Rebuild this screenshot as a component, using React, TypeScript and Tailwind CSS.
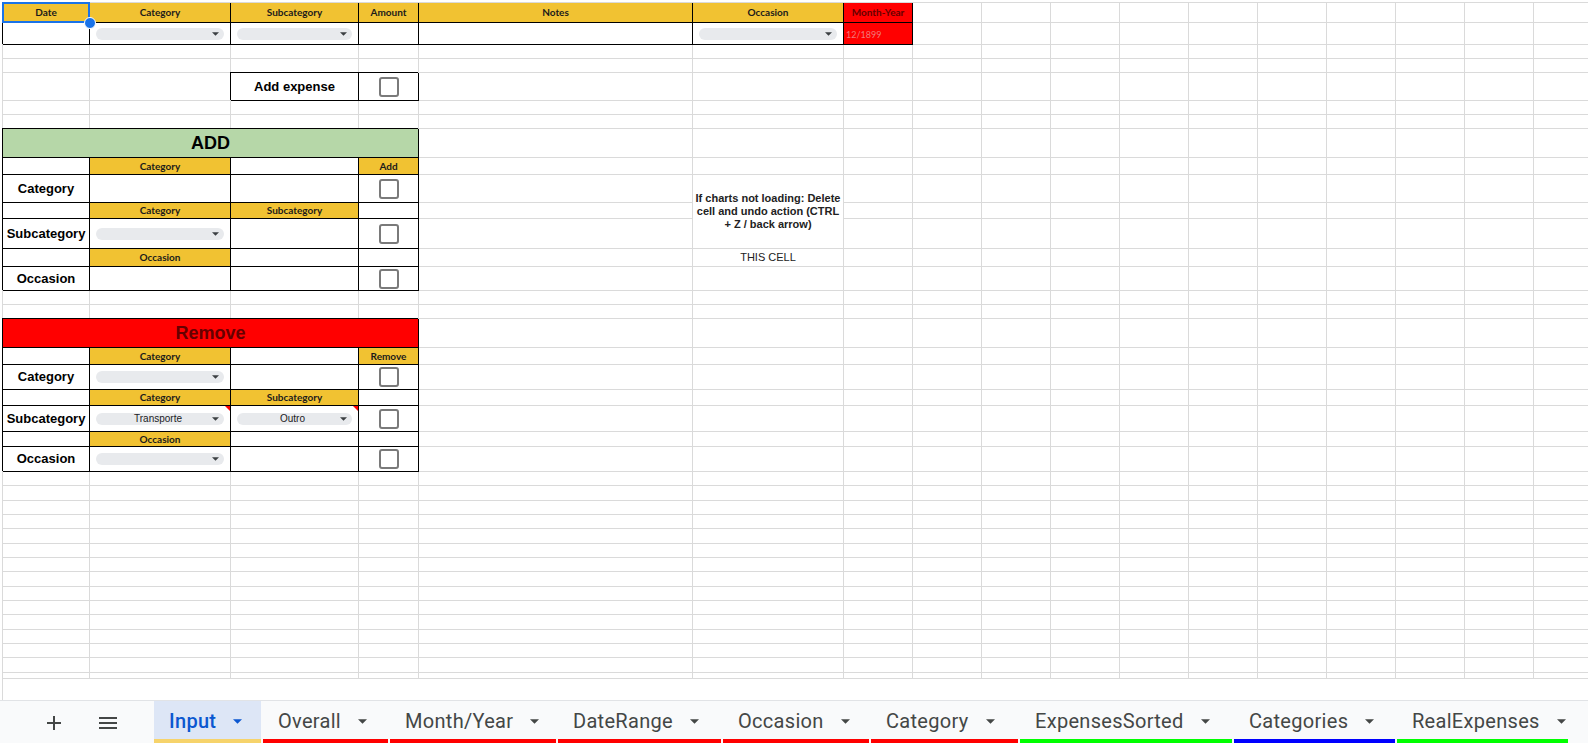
import React from 'react';

// sheet grid: 17 columns, 38 rows (last one is cut by the scroll area)
const ROW_COUNT = 38;
const COL_COUNT = 17;

const LINE = 'border-r border-b border-[#dadada] bg-white';
const BOX = 'border-r border-b border-black shadow-[-1px_-1px_0_0_#000]';
const BOX_TOP = 'border-r border-b border-black shadow-[-1px_0_0_0_#000]';

const ARIAL = "font-['Liberation_Sans',Arial,sans-serif]";
const CALIBRI = "font-['Lato',sans-serif]";

function Caret({ className = 'h-[4px] w-[7px] fill-[#3c4043]' }: { className?: string }) {
  return (
    <svg viewBox="0 0 8 4" className={`shrink-0 ${className}`}>
      <path d="M0 0h8L4 4z" />
    </svg>
  );
}

function Checkbox() {
  return <div className="h-[20px] w-[20px] rounded-[3px] border-2 border-[#7a7a7a] bg-white" />;
}

function Chip({ value }: { value?: string }) {
  return (
    <div className="flex h-[12px] flex-1 items-center rounded-full bg-[#e8eaed] pl-2 pr-[5px]">
      <span className={`flex-1 text-center ${ARIAL} text-[10px] leading-none text-[#202124]`}>{value}</span>
      <Caret />
    </div>
  );
}

const head = (text: string, border = BOX) => (
  <div
    className={`${border} flex items-center justify-center bg-[#f1c232] ${CALIBRI} text-[10px] font-bold text-[#1b1b1b]`}
  >
    {text}
  </div>
);

const label = (text: string) => (
  <div className={`${BOX} flex items-center justify-center bg-white ${ARIAL} text-[13px] font-bold text-black`}>
    {text}
  </div>
);

const blank = <div className={`${BOX} bg-white`} />;

const check = (
  <div className={`${BOX} flex items-center justify-center bg-white`}>
    <Checkbox />
  </div>
);

const chip = (value?: string, flagged = false) => (
  <div className={`${BOX} relative flex items-center bg-white px-[6px]`}>
    <Chip value={value} />
    {flagged && (
      <span className="absolute right-0 top-0 border-l-[5px] border-t-[5px] border-l-transparent border-t-[#ff0000]" />
    )}
  </div>
);

const dateCell = (
  <div className={`${BOX_TOP} relative flex items-center justify-center bg-[#f1c232] ${CALIBRI} text-[10px] font-bold text-[#1b1b1b]`}>
    Date
    <span className="absolute -left-px -top-px bottom-[-1px] right-[-1px] border-2 border-[#1a73e8]" />
    <span className="absolute bottom-[-7px] right-[-7px] z-10 h-[12px] w-[12px] rounded-full border border-white bg-[#1a73e8]" />
  </div>
);

const cells: Record<string, React.ReactNode> = {
  // input row
  '1:0': dateCell,
  '1:1': head('Category', BOX_TOP),
  '1:2': head('Subcategory', BOX_TOP),
  '1:3': head('Amount', BOX_TOP),
  '1:4': head('Notes', BOX_TOP),
  '1:5': head('Occasion', BOX_TOP),
  '1:6': (
    <div className={`${BOX_TOP} flex items-center justify-center bg-[#ff0000] ${CALIBRI} text-[10px] font-bold text-[#660000]`}>
      Month-Year
    </div>
  ),
  '2:0': blank,
  '2:1': chip(),
  '2:2': chip(),
  '2:3': blank,
  '2:4': blank,
  '2:5': chip(),
  '2:6': (
    <div className={`${BOX} flex items-end bg-[#ff0000] pb-[3px] pl-[2px] ${CALIBRI} text-[9px] text-[#f07a7a]`}>
      12/1899
    </div>
  ),
  '5:2': label('Add expense'),
  '5:3': check,

  // ADD block
  '8:0': (
    <div className={`${BOX} col-span-4 flex items-center justify-center bg-[#b6d7a8] ${ARIAL} text-[18px] font-bold text-black`}>
      ADD
    </div>
  ),
  '9:0': blank,
  '9:1': head('Category'),
  '9:2': blank,
  '9:3': head('Add'),
  '10:0': label('Category'),
  '10:1': blank,
  '10:2': blank,
  '10:3': check,
  '10:5': (
    <div className={`${LINE} row-span-3 flex flex-col items-center justify-center whitespace-nowrap ${ARIAL} text-[11px] font-bold leading-[13px] text-[#222]`}>
      <span>If charts not loading: Delete</span>
      <span>cell and undo action (CTRL</span>
      <span>+ Z / back arrow)</span>
    </div>
  ),
  '11:0': blank,
  '11:1': head('Category'),
  '11:2': head('Subcategory'),
  '11:3': blank,
  '12:0': label('Subcategory'),
  '12:1': chip(),
  '12:2': blank,
  '12:3': check,
  '13:0': blank,
  '13:1': head('Occasion'),
  '13:2': blank,
  '13:3': blank,
  '13:5': (
    <div className={`${LINE} flex items-center justify-center ${ARIAL} text-[11px] text-[#222]`}>THIS CELL</div>
  ),
  '14:0': label('Occasion'),
  '14:1': blank,
  '14:2': blank,
  '14:3': check,

  // Remove block
  '17:0': (
    <div className={`${BOX} col-span-4 flex items-center justify-center bg-[#ff0000] ${ARIAL} text-[18px] font-bold text-[#660000]`}>
      Remove
    </div>
  ),
  '18:0': blank,
  '18:1': head('Category'),
  '18:2': blank,
  '18:3': head('Remove'),
  '19:0': label('Category'),
  '19:1': chip(),
  '19:2': blank,
  '19:3': check,
  '20:0': blank,
  '20:1': head('Category'),
  '20:2': head('Subcategory'),
  '20:3': blank,
  '21:0': label('Subcategory'),
  '21:1': chip('Transporte', true),
  '21:2': chip('Outro', true),
  '21:3': check,
  '22:0': blank,
  '22:1': head('Occasion'),
  '22:2': blank,
  '22:3': blank,
  '23:0': label('Occasion'),
  '23:1': chip(),
  '23:2': blank,
  '23:3': check,
};

// cells covered by merges
const SKIP = new Set(['8:1', '8:2', '8:3', '17:1', '17:2', '17:3', '11:5', '12:5']);

const TABS = [
  { name: 'Input', w: 'w-[107px]', bar: 'bg-[#f6d36b]', active: true },
  { name: 'Overall', w: 'w-[125px]', bar: 'bg-[#ff0000]' },
  { name: 'Month/Year', w: 'w-[166px]', bar: 'bg-[#ff0000]' },
  { name: 'DateRange', w: 'w-[163px]', bar: 'bg-[#ff0000]' },
  { name: 'Occasion', w: 'w-[146px]', bar: 'bg-[#ff0000]' },
  { name: 'Category', w: 'w-[147px]', bar: 'bg-[#ff0000]' },
  { name: 'ExpensesSorted', w: 'w-[212px]', bar: 'bg-[#00ff00]' },
  { name: 'Categories', w: 'w-[161px]', bar: 'bg-[#0000ff]' },
  { name: 'RealExpenses', w: 'w-[171px]', bar: 'bg-[#00ff00]' },
];

function SheetTabs() {
  return (
    <div className="flex h-[43px] shrink-0 border-t border-[#e1e3e6] bg-[#f9fafb]">
      <div className="flex w-[154px] shrink-0 items-center pl-[44px] pt-[2px] text-[#444746]">
        <svg viewBox="0 0 20 20" className="h-5 w-5 stroke-[#444746]" fill="none" strokeWidth="2">
          <path d="M10 3v14M3 10h14" />
        </svg>
        <svg viewBox="0 0 20 20" className="ml-[34px] h-5 w-5 stroke-[#444746]" fill="none" strokeWidth="2">
          <path d="M1 5h18M1 10h18M1 15h18" />
        </svg>
      </div>
      <div className="flex gap-[2px]">
        {TABS.map((t) => (
          <div key={t.name} className={`flex shrink-0 flex-col ${t.w} ${t.active ? 'bg-[#dde6f6]' : ''}`}>
            <div
              className={`flex flex-1 items-center gap-[17px] pl-[15px] pt-[2px] font-['Roboto',sans-serif] text-[20px] tracking-[0.3px] ${
                t.active ? 'font-medium text-[#0b57d0]' : 'text-[#444746]'
              }`}
            >
              <span className="whitespace-nowrap">{t.name}</span>
              <Caret className={t.active ? 'h-[5px] w-[9px] fill-[#0b57d0]' : 'h-[5px] w-[9px] fill-[#444746]'} />
            </div>
            <div className={`h-[4px] ${t.bar}`} />
          </div>
        ))}
      </div>
    </div>
  );
}

export default function App() {
  const grid: React.ReactNode[] = [];
  for (let r = 1; r <= ROW_COUNT; r++) {
    for (let c = 0; c < COL_COUNT; c++) {
      const k = `${r}:${c}`;
      if (SKIP.has(k)) continue;
      grid.push(<React.Fragment key={k}>{cells[k] ?? <div className={LINE} />}</React.Fragment>);
    }
  }

  return (
    <div className="flex h-[743px] w-[1588px] flex-col overflow-hidden bg-white">
      <div className="h-[700px] shrink-0 overflow-hidden pl-[2px] pt-[2px]">
        <div className="h-full border-l border-[#dadada]">
          <div className="grid grid-cols-[87px_141px_128px_60px_274px_151px_69px_69px_69px_69px_69px_69px_69px_69px_69px_69px_69px] grid-rows-[20px_22px_14px_14px_28px_14px_14px_29px_17px_28px_16px_30px_18px_24px_14px_14px_29px_17px_25px_16px_26px_15px_25px_14px_15px_14px_14px_15px_14px_14px_15px_14px_14px_15px_14px_14px_15px_6px] border-t border-[#dadada]">
            {grid}
          </div>
        </div>
      </div>
      <SheetTabs />
    </div>
  );
}
